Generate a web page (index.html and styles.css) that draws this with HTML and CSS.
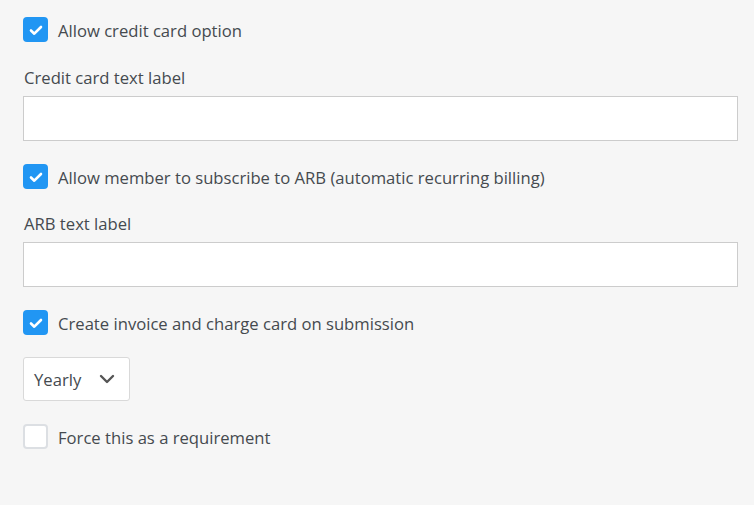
FILE: index.html
```html
<!DOCTYPE html>
<html>
<head>
<meta charset="utf-8">
<link rel="stylesheet" href="styles.css">
</head>
<body>
<form class="form">
  <label class="check-row">
    <span class="box checked">
      <svg viewBox="0 0 24 24" width="24" height="24"><path d="M7 12.5l3.3 3.2L17 9" fill="none" stroke="#fff" stroke-width="2.6" stroke-linecap="round" stroke-linejoin="round"/></svg>
    </span>
    <span class="check-text">Allow credit card option</span>
  </label>

  <div class="field first">
    <div class="field-label">Credit card text label</div>
    <div class="text-input"></div>
  </div>

  <label class="check-row">
    <span class="box checked">
      <svg viewBox="0 0 24 24" width="24" height="24"><path d="M7 12.5l3.3 3.2L17 9" fill="none" stroke="#fff" stroke-width="2.6" stroke-linecap="round" stroke-linejoin="round"/></svg>
    </span>
    <span class="check-text">Allow member to subscribe to ARB (automatic recurring billing)</span>
  </label>

  <div class="field">
    <div class="field-label">ARB text label</div>
    <div class="text-input"></div>
  </div>

  <label class="check-row">
    <span class="box checked">
      <svg viewBox="0 0 24 24" width="24" height="24"><path d="M7 12.5l3.3 3.2L17 9" fill="none" stroke="#fff" stroke-width="2.6" stroke-linecap="round" stroke-linejoin="round"/></svg>
    </span>
    <span class="check-text">Create invoice and charge card on submission</span>
  </label>

  <div class="select">
    <span class="select-value">Yearly</span>
    <svg class="chevron" viewBox="0 0 16 10" width="16" height="10"><path d="M2 2l6 6 6-6" fill="none" stroke="#555" stroke-width="2.4" stroke-linecap="round" stroke-linejoin="round"/></svg>
  </div>

  <label class="check-row">
    <span class="box"></span>
    <span class="check-text">Force this as a requirement</span>
  </label>
</form>
</body>
</html>
```

FILE: styles.css
```css
html, body {
  margin: 0;
  padding: 0;
  background: #f6f6f6;
}
body {
  font-family: "Open Sans", "Noto Sans", sans-serif;
  font-size: 16.65px;
  color: #454a4f;
}
.form {
  display: flex;
  flex-direction: column;
  padding: 17px 16px 0 23px;
}
.check-row {
  display: flex;
  align-items: center;
  height: 25px;
  gap: 10px;
}
.box {
  width: 25px;
  height: 25px;
  box-sizing: border-box;
  border-radius: 4px;
  border: 2px solid #dcdfe3;
  background: #fff;
  flex: none;
  display: flex;
  align-items: center;
  justify-content: center;
}
.box.checked {
  background: #2196f3;
  border: none;
}
.check-text {
  line-height: 25px;
  padding-top: 1px;
}
.field {
  display: flex;
  flex-direction: column;
  margin-top: 23px;
  margin-bottom: 23px;
}
.field.first {
  margin-top: 24px;
}
.field-label {
  line-height: 24px;
  margin-left: 1px;
  margin-bottom: 6px;
}
.text-input {
  height: 45px;
  box-sizing: border-box;
  border: 1px solid #cccccc;
  background: #fff;
}
.select {
  margin-top: 22px;
  margin-bottom: 23px;
  width: 107px;
  height: 44px;
  box-sizing: border-box;
  border: 1px solid #d9d9d9;
  border-radius: 3px;
  background: #fff;
  display: flex;
  align-items: center;
  justify-content: space-between;
  padding: 0 14px 0 10px;
}
.chevron {
  display: block;
}
```
